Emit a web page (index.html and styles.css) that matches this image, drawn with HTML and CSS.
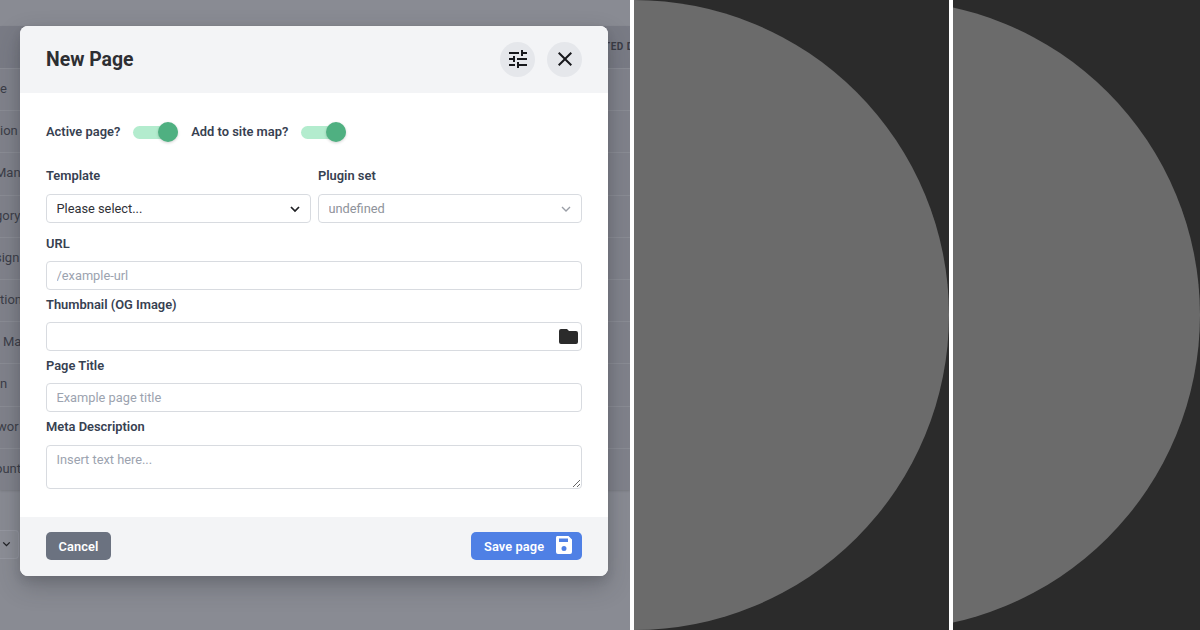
FILE: index.html
```html
<!DOCTYPE html>
<html lang="en">
<head>
<meta charset="utf-8">
<title>New Page</title>
<link rel="stylesheet" href="styles.css">
</head>
<body>
<main class="shot">
  <section class="app">
    <div class="table">
      <div class="thead"><span>TED D</span></div>
      <div class="row">e</div>
      <div class="row">ion</div>
      <div class="row row-cut">Man</div>
      <div class="row row-cut">gory</div>
      <div class="row row-cut">sign</div>
      <div class="row">tion</div>
      <div class="row row-indent">Ma</div>
      <div class="row">n</div>
      <div class="row row-cut-small">wor</div>
      <div class="row row-cut">ount</div>
    </div>
    <div class="pager">
      <div class="pager-select">
        <svg class="chev" viewBox="0 0 24 24" width="18" height="18"><path d="M6 9l6 6 6-6" fill="none" stroke="currentColor" stroke-width="2.600"/></svg>
      </div>
    </div>
    <div class="modal">
      <header class="modal-head">
        <h1>New Page</h1>
        <div class="head-actions">
          <button class="round" type="button" aria-label="Settings">
            <svg viewBox="0 0 24 24" width="24" height="24"><path d="M3 17v2h6v-2H3zM3 5v2h10V5H3zm10 16v-2h8v-2h-8v-2h-2v6h2zM7 9v2H3v2h4v2h2V9H7zm14 4v-2H11v2h10zm-6-4h2V7h4V5h-4V3h-2v6z"/></svg>
          </button>
          <button class="round" type="button" aria-label="Close">
            <svg viewBox="0 0 24 24" width="24" height="24"><path d="M19 6.410L17.590 5 12 10.590 6.410 5 5 6.410 10.590 12 5 17.590 6.410 19 12 13.410 17.590 19 19 17.590 13.410 12z"/></svg>
          </button>
        </div>
      </header>
      <form class="modal-body">
        <div class="toggles">
          <span class="label">Active page?</span>
          <span class="switch"><span class="knob"></span></span>
          <span class="label">Add to site map?</span>
          <span class="switch"><span class="knob"></span></span>
        </div>
        <div class="two">
          <div class="field">
            <label class="label">Template</label>
            <div class="select-wrap">
              <select class="control"><option>Please select...</option></select>
              <svg class="chev" viewBox="0 0 24 24" width="16" height="16"><path d="M6 9l6 6 6-6" fill="none" stroke="currentColor" stroke-width="2.600"/></svg>
            </div>
          </div>
          <div class="field">
            <label class="label">Plugin set</label>
            <div class="select-wrap muted">
              <select class="control" disabled><option>undefined</option></select>
              <svg class="chev" viewBox="0 0 24 24" width="16" height="16"><path d="M6 9l6 6 6-6" fill="none" stroke="currentColor" stroke-width="2"/></svg>
            </div>
          </div>
        </div>
        <div class="field after-two">
          <label class="label">URL</label>
          <input class="control" placeholder="/example-url">
        </div>
        <div class="field">
          <label class="label">Thumbnail (OG Image)</label>
          <div class="select-wrap">
            <input class="control">
            <svg class="folder" viewBox="0 0 19 15" width="19" height="15"><path d="M2 0h6l2 2h7a2 2 0 0 1 2 2v9a2 2 0 0 1-2 2H2a2 2 0 0 1-2-2V2a2 2 0 0 1 2-2z"/></svg>
          </div>
        </div>
        <div class="field">
          <label class="label">Page Title</label>
          <input class="control" placeholder="Example page title">
        </div>
        <div class="field tall">
          <label class="label">Meta Description</label>
          <textarea class="control area" placeholder="Insert text here..."></textarea>
        </div>
      </form>
      <footer class="modal-foot">
        <button class="btn btn-grey" type="button">Cancel</button>
        <button class="btn btn-blue" type="button">Save page
          <svg viewBox="0 0 18 18" width="18" height="18"><path fill-rule="evenodd" d="M2 0h11.500L17 3.500V16a2 2 0 0 1-2 2H3a2 2 0 0 1-2-2V2a2 2 0 0 1 1-2zM4 2.500V6h9V2.500H4zM9 10a2.500 2.500 0 1 0 0 5 2.500 2.500 0 0 0 0-5z"/></svg>
        </button>
      </footer>
    </div>
  </section>
  <section class="panel panel-a"><div class="disc"></div></section>
  <section class="panel panel-b"><div class="disc"></div></section>
</main>
</body>
</html>
```
FILE: styles.css
```css
* { box-sizing: border-box; }
html, body { margin: 0; padding: 0; }
body {
  width: 1200px;
  height: 630px;
  overflow: hidden;
  background: #fff;
  font-family: Roboto, "Liberation Sans", sans-serif;
}
.shot {
  display: flex;
  gap: 4px;
  width: 1200px;
  height: 630px;
}
.app {
  position: relative;
  flex: 0 0 630px;
  height: 630px;
  overflow: hidden;
  background: #898b93;
  padding-top: 26px;
  color: #3b3d47;
}
.table {
  background: #80828b;
  box-shadow: 0 1px 2px rgba(0,0,0,.12);
}
.thead {
  display: flex;
  align-items: center;
  height: 42px;
  padding: 0 0 2px 604px;
  background: #797b85;
  font-size: 10px;
  font-weight: 700;
  letter-spacing: .5px;
  white-space: nowrap;
  color: #3a3c46;
}
.row {
  height: 42.200px;
  line-height: 39px;
  font-size: 13px;
  border-top: 1px solid #8a8c94;
  white-space: nowrap;
}
.row-cut { margin-left: -5px; }
.row-cut-small { margin-left: -3px; }
.row-indent { padding-left: 3px; }
.pager {
  display: flex;
  margin-top: 40px;
}
.pager-select {
  display: flex;
  align-items: center;
  justify-content: flex-end;
  width: 19px;
  height: 29px;
  border: 1px solid #9597a0;
  border-radius: 0 4px 4px 0;
  border-left: 0;
  background: #8c8e96;
  padding-right: 5px;
  color: #2b2c33;
}
.modal {
  position: absolute;
  left: 20px;
  top: 26px;
  width: 588px;
  height: 550px;
  display: flex;
  flex-direction: column;
  background: #fff;
  border-radius: 8px;
  overflow: hidden;
  box-shadow: 0 10px 24px rgba(40,42,50,.28), 0 4px 8px rgba(40,42,50,.12);
}
.modal-head {
  flex: 0 0 67px;
  display: flex;
  align-items: center;
  justify-content: space-between;
  padding: 0 26px;
  background: #f3f4f6;
}
h1 {
  margin: 0;
  font-size: 19.400px;
  font-weight: 700;
  color: #2d2e32;
}
.head-actions { display: flex; gap: 12px; margin-top: -1px; }
.round {
  display: flex;
  align-items: center;
  justify-content: center;
  width: 35px;
  height: 35px;
  padding: 0;
  border: 0;
  border-radius: 50%;
  background: #e5e7eb;
}
.round svg { fill: #17181c; }
.modal-body {
  flex: 1;
  display: flex;
  flex-direction: column;
  gap: 5px;
  padding: 27px 26px 0;
}
.toggles {
  display: flex;
  align-items: center;
  height: 24px;
  margin-bottom: 17px;
}
.label {
  display: block;
  font-size: 12.880px;
  line-height: 20px;
  font-weight: 600;
  color: #374151;
}
.switch {
  position: relative;
  display: block;
  width: 45px;
  height: 13px;
  margin: 0 13px;
  border-radius: 7px;
  background: #b3ecce;
}
.knob {
  position: absolute;
  right: 0;
  top: -3.500px;
  width: 20px;
  height: 20px;
  border-radius: 50%;
  background: #4fb081;
  box-shadow: 0 1px 3px rgba(0,0,0,.18);
}
.two {
  display: grid;
  grid-template-columns: 265px 264px;
  column-gap: 7px;
}
.field .label { margin-bottom: 7px; }
.two .label { margin-bottom: 8px; }
.tall .label { margin-bottom: 8px; }
.after-two { margin-top: 6px; }
.control {
  display: block;
  width: 100%;
  height: 29px;
  padding: 0 9.500px;
  border: 1px solid #d8dbe0;
  border-radius: 4px;
  background: #fff;
  font-family: Roboto, "Liberation Sans", sans-serif;
  font-size: 12.800px;
  color: #2f3137;
  outline: 0;
}
.control::placeholder { color: #9ca3af; opacity: 1; }
select.control { appearance: none; -webkit-appearance: none; }
.area {
  height: 43.500px;
  padding: 6px 9.500px;
  resize: vertical;
  line-height: 16px;
}
.select-wrap { position: relative; }
.select-wrap .chev, .select-wrap .folder {
  position: absolute;
  top: 50%;
  pointer-events: none;
}
.chev { color: #1f2024; }
.select-wrap .chev { right: 8px; margin-top: -8px; }
.muted .chev { color: #9a9ea6; }
.muted .control { color: #8f939b; background: #fff; opacity: 1; }
.folder { right: 4px; margin-top: -7.500px; fill: #2b2b2b; }
.modal-foot {
  flex: 0 0 59px;
  display: flex;
  align-items: center;
  justify-content: space-between;
  padding: 0 26px 1px;
  background: #f3f4f6;
}
.btn {
  display: flex;
  align-items: center;
  height: 28px;
  border: 0;
  border-radius: 5px;
  color: #fff;
  font-family: Roboto, "Liberation Sans", sans-serif;
  font-size: 12.800px;
  font-weight: 600;
  letter-spacing: .1px;
}
.btn-grey {
  justify-content: center;
  width: 65px;
  padding: 0;
  background: #6b7280;
}
.btn-blue {
  justify-content: space-between;
  width: 111px;
  padding: 0 9px 0 13px;
  background: #4f80e5;
}
.btn-blue svg { fill: #fff; margin-top: -3px; }
.panel {
  display: flex;
  justify-content: flex-end;
  overflow: hidden;
  height: 630px;
  background: #2b2b2b;
}
.panel-a { flex: 0 0 315px; }
.panel-b { flex: 0 0 247px; }
.disc {
  flex: 0 0 630px;
  height: 630px;
  border-radius: 50%;
  background: #6b6b6b;
}
```
